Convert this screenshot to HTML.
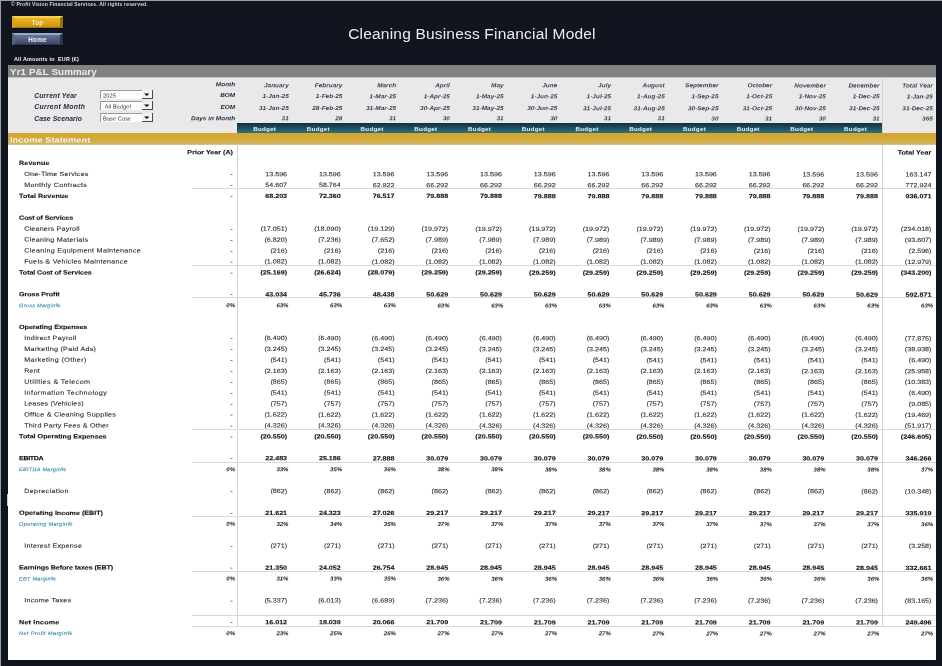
<!DOCTYPE html>
<html lang="en">
<head>
<meta charset="utf-8">
<title>Cleaning Business Financial Model</title>
<style>
*{box-sizing:border-box;margin:0;padding:0}
html,body{width:942px;height:666px;overflow:hidden;background:#10151f}
body{position:relative;font-family:"Liberation Sans",sans-serif;color:#1a1a1a}
#pg{position:absolute;left:0;top:0;width:942px;height:666px;overflow:hidden;filter:blur(.3px)}
.a{position:absolute;white-space:nowrap}
.c{text-align:center}
.row,.hd{position:absolute;left:0;width:942px;height:10px;line-height:10px;transform-origin:0 0;white-space:nowrap}
.row{font-size:6.4px;color:#2a2a2a;-webkit-text-stroke:.1px #2a2a2a}
.row span,.hd span{position:absolute;top:0}
.v{text-align:right;width:60px}
.b,.h{font-weight:bold;color:#161616;-webkit-text-stroke:.12px #161616}
.row .p{font-weight:normal;color:#333;-webkit-text-stroke:.1px #333}
.m{font-style:italic;font-weight:bold;font-size:6.0px;color:#2c2c2c;-webkit-text-stroke:.04px #2c2c2c}
.m .l{color:#318aa9;font-weight:normal;font-size:5.5px;-webkit-text-stroke:.12px #318aa9}
.hd{font-size:6.2px;font-style:italic;font-weight:bold;color:#3b4152;letter-spacing:.03px}
.hd .k{color:#262c40}
.bd{position:absolute;left:0;top:124.2px;width:942px;height:10px;line-height:10px;font-size:6.2px;font-weight:bold;color:#eef3f5;letter-spacing:.3px}
.bd span{position:absolute;top:0;width:50px;text-align:center}
.hl{position:absolute;left:192px;width:744px;height:1px;background:#d9d9d9}
.vl{position:absolute;width:1px;background:#d3d3d3}
.btn{position:absolute;left:12px;width:51px;height:12px;border-style:solid;border-width:2px 3px 1px 3px;color:#f6ecc4;font-weight:bold;font-size:6.3px;letter-spacing:.3px;line-height:10.4px;text-align:center;box-shadow:0 0 1.5px 0.5px rgba(0,0,0,.8)}
.btn.t{background:linear-gradient(#ebb624 0%,#e0a519 50%,#c99312 100%);border-color:#f7d450 #94700f #9f770d #d9a31b}
.btn.g{background:linear-gradient(#64769a 0%,#4f5f7d 50%,#3d4a63 100%);border-color:#96a8cc #2b3447 #2e384d #55647f;color:#f0f3fa;line-height:9.4px}
.lb{position:absolute;left:34.2px;font-size:6.8px;line-height:11px;font-style:italic;font-weight:bold;color:#232a3e;white-space:nowrap}
.dd{position:absolute;left:99.5px;width:53.3px;height:9px;background:rgba(253,253,253,.99);border:1px solid #9a9a9a;border-right:0;border-bottom:0;font-size:5.7px;letter-spacing:.05px;line-height:8.8px;color:#383838;padding-left:2.6px;white-space:nowrap}
.dd i{position:absolute;right:0;top:-1px;width:11px;height:9px;background:#f1f1f1;border-right:1px solid #4a4a4a;border-bottom:1px solid #4a4a4a}
.dd i:after{content:"";position:absolute;left:2.3px;top:3.4px;width:5.4px;height:2.7px;background:#0c0c0c;clip-path:polygon(0 0,100% 0,50% 100%)}
.dd b{display:inline-block;font-weight:normal;transform:matrix(1,.0005,0,1,0,.55)}
</style>
</head>
<body>
<div id="pg">
<div class="a" style="left:0;top:0;width:942px;height:1px;background:#9fa1a6"></div>
<div class="a" style="left:0;top:0;width:1px;height:666px;background:#9a9ca4"></div>
<div class="a" style="left:11px;top:1px;font-size:5px;letter-spacing:.17px;line-height:7px;color:#d8d8d8;font-weight:bold">© Profit Vision Financial Services. All rights reserved.</div>
<div class="btn t" style="top:16px">Top</div>
<div class="btn g" style="top:33px">Home</div>
<div class="a c" style="left:272px;width:400px;top:22.5px;font-size:15.5px;letter-spacing:.19px;line-height:22px;color:#ececec">Cleaning Business Financial Model</div>
<div class="a" style="left:14px;top:55.2px;font-size:5.4px;letter-spacing:.2px;line-height:8px;color:#f2f2f2;font-weight:bold">All Amounts in&nbsp; EUR (€)</div>
<div class="a" style="left:8px;top:65px;width:928px;height:12px;background:#818283"></div>
<div class="a" style="left:8px;top:77px;width:928px;height:56px;background:linear-gradient(#c4c4c5 0,#c4c4c5 1px,#e9e9ea 1px)"></div>
<div class="a" style="left:8px;top:144px;width:928px;height:516px;background:#fff"></div>
<div class="a" style="left:7px;top:494px;width:1px;height:12px;background:#c9ccd2"></div>
<div class="vl" style="left:237px;top:145px;height:481px"></div>
<div class="vl" style="left:882px;top:77px;height:549px"></div>
<div class="a" style="left:237px;top:123px;width:645px;height:10px;background:linear-gradient(#172c40 0%,#1f566a 60%,#2a7482 100%)"></div>
<div class="a" style="left:8px;top:133px;width:928px;height:12px;background:linear-gradient(#d6a628 0%,#d3aa3a 45%,#cfb25c 88%,#dcc88e 100%)"></div>
<div class="a" style="left:10px;top:66.3px;font-size:9.8px;letter-spacing:.1px;line-height:12px;color:#ececec;font-weight:bold">Yr1 P&amp;L Summary</div>
<div class="a" style="left:10px;top:134px;font-size:7.7px;line-height:12px;color:#f6f3ea;font-weight:bold;transform:matrix(1.213,0.0005,0,1,0,.6);transform-origin:0 50%">Income Statement</div>
<div class="lb" style="top:90.1px;letter-spacing:0.16px">Current Year</div>
<div class="dd" style="top:90px"><b>2025</b><i></i></div>
<div class="lb" style="top:100.8px;letter-spacing:0.33px">Current Month</div>
<div class="dd" style="top:101px"><b>&nbsp;All Budget</b><i></i></div>
<div class="lb" style="top:112.8px;letter-spacing:0.07px">Case Scenario</div>
<div class="dd" style="top:113px"><b>Base Case</b><i></i></div>
<div class="hd" style="top:80px;transform:matrix(1.035,0.0005,0,0.94,0,0.42)"><span class="v k" style="left:167.25px;top:-1.12px">Month</span><span class="v" style="left:218.99px">January</span><span class="v" style="left:270.89px">February</span><span class="v" style="left:322.79px">March</span><span class="v" style="left:374.7px">April</span><span class="v" style="left:426.6px">May</span><span class="v" style="left:478.5px">June</span><span class="v" style="left:530.41px">July</span><span class="v" style="left:582.31px">August</span><span class="v" style="left:634.21px">September</span><span class="v" style="left:686.12px">October</span><span class="v" style="left:738.02px">November</span><span class="v" style="left:789.92px">December</span><span class="v" style="left:841.35px">Total Year</span></div>
<div class="hd" style="top:91px;transform:matrix(1.035,0.0005,0,0.94,0,0.37)"><span class="v k" style="left:167.25px;top:-0.74px">BOM</span><span class="v" style="left:218.99px">1-Jan-25</span><span class="v" style="left:270.89px">1-Feb-25</span><span class="v" style="left:322.79px">1-Mar-25</span><span class="v" style="left:374.7px">1-Apr-25</span><span class="v" style="left:426.6px">1-May-25</span><span class="v" style="left:478.5px">1-Jun-25</span><span class="v" style="left:530.41px">1-Jul-25</span><span class="v" style="left:582.31px">1-Aug-25</span><span class="v" style="left:634.21px">1-Sep-25</span><span class="v" style="left:686.12px">1-Oct-25</span><span class="v" style="left:738.02px">1-Nov-25</span><span class="v" style="left:789.92px">1-Dec-25</span><span class="v" style="left:841.35px">1-Jan-25</span></div>
<div class="hd" style="top:103px;transform:matrix(1.035,0.0005,0,0.94,0,0.27)"><span class="v k" style="left:167.25px;top:-1.06px">EOM</span><span class="v" style="left:218.99px">31-Jan-25</span><span class="v" style="left:270.89px">28-Feb-25</span><span class="v" style="left:322.79px">31-Mar-25</span><span class="v" style="left:374.7px">30-Apr-25</span><span class="v" style="left:426.6px">31-May-25</span><span class="v" style="left:478.5px">30-Jun-25</span><span class="v" style="left:530.41px">31-Jul-25</span><span class="v" style="left:582.31px">31-Aug-25</span><span class="v" style="left:634.21px">30-Sep-25</span><span class="v" style="left:686.12px">31-Oct-25</span><span class="v" style="left:738.02px">30-Nov-25</span><span class="v" style="left:789.92px">31-Dec-25</span><span class="v" style="left:841.35px">31-Dec-25</span></div>
<div class="hd" style="top:113px;transform:matrix(1.035,0.0005,0,0.94,0,0.47)"><span class="v k" style="left:167.25px">Days in Month</span><span class="v" style="left:218.99px">31</span><span class="v" style="left:270.89px">28</span><span class="v" style="left:322.79px">31</span><span class="v" style="left:374.7px">30</span><span class="v" style="left:426.6px">31</span><span class="v" style="left:478.5px">30</span><span class="v" style="left:530.41px">31</span><span class="v" style="left:582.31px">31</span><span class="v" style="left:634.21px">30</span><span class="v" style="left:686.12px">31</span><span class="v" style="left:738.02px">30</span><span class="v" style="left:789.92px">31</span><span class="v" style="left:841.35px">365</span></div>
<div class="bd"><span style="left:239.7px">Budget</span><span style="left:293.4px">Budget</span><span style="left:347.1px">Budget</span><span style="left:400.9px">Budget</span><span style="left:454.6px">Budget</span><span style="left:508.3px">Budget</span><span style="left:562.0px">Budget</span><span style="left:615.7px">Budget</span><span style="left:669.5px">Budget</span><span style="left:723.2px">Budget</span><span style="left:776.9px">Budget</span><span style="left:830.6px">Budget</span></div>
<div class="row b" style="top:147px;transform:matrix(1.12,0.0005,0,0.94,0,0.59)"><span class="v" style="left:148.04px">Prior Year (A)</span><span class="v" style="left:771.43px">Total Year</span></div>
<div class="row h" style="top:158px;transform:matrix(1.12,0.0005,0,0.94,0,0.52)"><span class="l" style="left:17.05px;letter-spacing:0.07px">Revenue</span></div>
<div class="row i" style="top:169px;transform:matrix(1.12,0.0005,0,0.94,0,0.45)"><span class="l" style="left:21.61px;letter-spacing:0.18px">One-Time Services</span><span class="v p" style="left:147.77px">-</span><span class="v" style="left:196.34px">13.596</span><span class="v" style="left:244.3px">13.596</span><span class="v" style="left:292.27px">13.596</span><span class="v" style="left:340.23px">13.596</span><span class="v" style="left:388.2px">13.596</span><span class="v" style="left:436.16px">13.596</span><span class="v" style="left:484.12px">13.596</span><span class="v" style="left:532.09px">13.596</span><span class="v" style="left:580.05px">13.596</span><span class="v" style="left:628.02px">13.596</span><span class="v" style="left:675.98px">13.596</span><span class="v" style="left:723.95px">13.596</span><span class="v" style="left:771.7px">163.147</span></div>
<div class="row i" style="top:180px;transform:matrix(1.12,0.0005,0,0.94,0,0.38)"><span class="l" style="left:21.61px;letter-spacing:0.28px">Monthly Contracts</span><span class="v p" style="left:147.77px">-</span><span class="v" style="left:196.34px">54.607</span><span class="v" style="left:244.3px">58.764</span><span class="v" style="left:292.27px">62.922</span><span class="v" style="left:340.23px">66.292</span><span class="v" style="left:388.2px">66.292</span><span class="v" style="left:436.16px">66.292</span><span class="v" style="left:484.12px">66.292</span><span class="v" style="left:532.09px">66.292</span><span class="v" style="left:580.05px">66.292</span><span class="v" style="left:628.02px">66.292</span><span class="v" style="left:675.98px">66.292</span><span class="v" style="left:723.95px">66.292</span><span class="v" style="left:771.7px">772.924</span></div>
<div class="row b" style="top:191px;transform:matrix(1.12,0.0005,0,0.94,0,0.31)"><span class="l" style="left:17.05px;letter-spacing:0.06px">Total Revenue</span><span class="v p" style="left:147.77px">-</span><span class="v" style="left:196.34px">68.203</span><span class="v" style="left:244.3px">72.360</span><span class="v" style="left:292.27px">76.517</span><span class="v" style="left:340.23px">79.888</span><span class="v" style="left:388.2px">79.888</span><span class="v" style="left:436.16px">79.888</span><span class="v" style="left:484.12px">79.888</span><span class="v" style="left:532.09px">79.888</span><span class="v" style="left:580.05px">79.888</span><span class="v" style="left:628.02px">79.888</span><span class="v" style="left:675.98px">79.888</span><span class="v" style="left:723.95px">79.888</span><span class="v" style="left:771.7px">936.071</span></div>
<div class="row h" style="top:213px;transform:matrix(1.12,0.0005,0,0.94,0,0.17)"><span class="l" style="left:17.05px;letter-spacing:-0.12px">Cost of Services</span></div>
<div class="row i" style="top:224px;transform:matrix(1.12,0.0005,0,0.94,0,0.1)"><span class="l" style="left:21.61px;letter-spacing:0.17px">Cleaners Payroll</span><span class="v p" style="left:147.77px">-</span><span class="v" style="left:196.34px">(17.051)</span><span class="v" style="left:244.3px">(18.090)</span><span class="v" style="left:292.27px">(19.129)</span><span class="v" style="left:340.23px">(19.972)</span><span class="v" style="left:388.2px">(19.972)</span><span class="v" style="left:436.16px">(19.972)</span><span class="v" style="left:484.12px">(19.972)</span><span class="v" style="left:532.09px">(19.972)</span><span class="v" style="left:580.05px">(19.972)</span><span class="v" style="left:628.02px">(19.972)</span><span class="v" style="left:675.98px">(19.972)</span><span class="v" style="left:723.95px">(19.972)</span><span class="v" style="left:771.7px">(234.018)</span></div>
<div class="row i" style="top:235px;transform:matrix(1.12,0.0005,0,0.94,0,0.03)"><span class="l" style="left:21.61px;letter-spacing:0.24px">Cleaning Materials</span><span class="v p" style="left:147.77px">-</span><span class="v" style="left:196.34px">(6.820)</span><span class="v" style="left:244.3px">(7.236)</span><span class="v" style="left:292.27px">(7.652)</span><span class="v" style="left:340.23px">(7.989)</span><span class="v" style="left:388.2px">(7.989)</span><span class="v" style="left:436.16px">(7.989)</span><span class="v" style="left:484.12px">(7.989)</span><span class="v" style="left:532.09px">(7.989)</span><span class="v" style="left:580.05px">(7.989)</span><span class="v" style="left:628.02px">(7.989)</span><span class="v" style="left:675.98px">(7.989)</span><span class="v" style="left:723.95px">(7.989)</span><span class="v" style="left:771.7px">(93.607)</span></div>
<div class="row i" style="top:245px;transform:matrix(1.12,0.0005,0,0.94,0,0.96)"><span class="l" style="left:21.61px;letter-spacing:0.28px">Cleaning Equipment Maintenance</span><span class="v p" style="left:147.77px">-</span><span class="v" style="left:196.34px">(216)</span><span class="v" style="left:244.3px">(216)</span><span class="v" style="left:292.27px">(216)</span><span class="v" style="left:340.23px">(216)</span><span class="v" style="left:388.2px">(216)</span><span class="v" style="left:436.16px">(216)</span><span class="v" style="left:484.12px">(216)</span><span class="v" style="left:532.09px">(216)</span><span class="v" style="left:580.05px">(216)</span><span class="v" style="left:628.02px">(216)</span><span class="v" style="left:675.98px">(216)</span><span class="v" style="left:723.95px">(216)</span><span class="v" style="left:771.7px">(2.596)</span></div>
<div class="row i" style="top:256px;transform:matrix(1.12,0.0005,0,0.94,0,0.89)"><span class="l" style="left:21.61px;letter-spacing:0.25px">Fuels &amp; Vehicles Maintenance</span><span class="v p" style="left:147.77px">-</span><span class="v" style="left:196.34px">(1.082)</span><span class="v" style="left:244.3px">(1.082)</span><span class="v" style="left:292.27px">(1.082)</span><span class="v" style="left:340.23px">(1.082)</span><span class="v" style="left:388.2px">(1.082)</span><span class="v" style="left:436.16px">(1.082)</span><span class="v" style="left:484.12px">(1.082)</span><span class="v" style="left:532.09px">(1.082)</span><span class="v" style="left:580.05px">(1.082)</span><span class="v" style="left:628.02px">(1.082)</span><span class="v" style="left:675.98px">(1.082)</span><span class="v" style="left:723.95px">(1.082)</span><span class="v" style="left:771.7px">(12.979)</span></div>
<div class="row b" style="top:267px;transform:matrix(1.12,0.0005,0,0.94,0,0.82)"><span class="l" style="left:17.05px;letter-spacing:-0.08px">Total Cost of Services</span><span class="v p" style="left:147.77px">-</span><span class="v" style="left:196.34px">(25.169)</span><span class="v" style="left:244.3px">(26.624)</span><span class="v" style="left:292.27px">(28.079)</span><span class="v" style="left:340.23px">(29.259)</span><span class="v" style="left:388.2px">(29.259)</span><span class="v" style="left:436.16px">(29.259)</span><span class="v" style="left:484.12px">(29.259)</span><span class="v" style="left:532.09px">(29.259)</span><span class="v" style="left:580.05px">(29.259)</span><span class="v" style="left:628.02px">(29.259)</span><span class="v" style="left:675.98px">(29.259)</span><span class="v" style="left:723.95px">(29.259)</span><span class="v" style="left:771.7px">(343.200)</span></div>
<div class="row b" style="top:289px;transform:matrix(1.12,0.0005,0,0.94,0,0.68)"><span class="l" style="left:17.05px;letter-spacing:-0.06px">Gross Profit</span><span class="v p" style="left:147.77px">-</span><span class="v" style="left:196.34px">43.034</span><span class="v" style="left:244.3px">45.736</span><span class="v" style="left:292.27px">48.438</span><span class="v" style="left:340.23px">50.629</span><span class="v" style="left:388.2px">50.629</span><span class="v" style="left:436.16px">50.629</span><span class="v" style="left:484.12px">50.629</span><span class="v" style="left:532.09px">50.629</span><span class="v" style="left:580.05px">50.629</span><span class="v" style="left:628.02px">50.629</span><span class="v" style="left:675.98px">50.629</span><span class="v" style="left:723.95px">50.629</span><span class="v" style="left:771.7px">592.871</span></div>
<div class="row m" style="top:300px;transform:matrix(1.0,0.0005,0,0.94,0,0.58)"><span class="l" style="left:19.1px;letter-spacing:0.29px">Gross Margin%</span><span class="v" style="left:175px">0%</span><span class="v" style="left:228.4px">63%</span><span class="v" style="left:282.12px">63%</span><span class="v" style="left:335.84px">63%</span><span class="v" style="left:389.56px">63%</span><span class="v" style="left:443.28px">63%</span><span class="v" style="left:497px">63%</span><span class="v" style="left:550.72px">63%</span><span class="v" style="left:604.44px">63%</span><span class="v" style="left:658.16px">63%</span><span class="v" style="left:711.88px">63%</span><span class="v" style="left:765.6px">63%</span><span class="v" style="left:819.32px">63%</span><span class="v" style="left:873.1px">63%</span></div>
<div class="row h" style="top:322px;transform:matrix(1.12,0.0005,0,0.94,0,0.47)"><span class="l" style="left:17.05px;letter-spacing:-0.05px">Operating Expenses</span></div>
<div class="row i" style="top:333px;transform:matrix(1.12,0.0005,0,0.94,0,0.4)"><span class="l" style="left:21.61px;letter-spacing:0.29px">Indirect Payroll</span><span class="v p" style="left:147.77px">-</span><span class="v" style="left:196.34px">(6.490)</span><span class="v" style="left:244.3px">(6.490)</span><span class="v" style="left:292.27px">(6.490)</span><span class="v" style="left:340.23px">(6.490)</span><span class="v" style="left:388.2px">(6.490)</span><span class="v" style="left:436.16px">(6.490)</span><span class="v" style="left:484.12px">(6.490)</span><span class="v" style="left:532.09px">(6.490)</span><span class="v" style="left:580.05px">(6.490)</span><span class="v" style="left:628.02px">(6.490)</span><span class="v" style="left:675.98px">(6.490)</span><span class="v" style="left:723.95px">(6.490)</span><span class="v" style="left:771.7px">(77.875)</span></div>
<div class="row i" style="top:344px;transform:matrix(1.12,0.0005,0,0.94,0,0.33)"><span class="l" style="left:21.61px;letter-spacing:0.25px">Marketing (Paid Ads)</span><span class="v p" style="left:147.77px">-</span><span class="v" style="left:196.34px">(3.245)</span><span class="v" style="left:244.3px">(3.245)</span><span class="v" style="left:292.27px">(3.245)</span><span class="v" style="left:340.23px">(3.245)</span><span class="v" style="left:388.2px">(3.245)</span><span class="v" style="left:436.16px">(3.245)</span><span class="v" style="left:484.12px">(3.245)</span><span class="v" style="left:532.09px">(3.245)</span><span class="v" style="left:580.05px">(3.245)</span><span class="v" style="left:628.02px">(3.245)</span><span class="v" style="left:675.98px">(3.245)</span><span class="v" style="left:723.95px">(3.245)</span><span class="v" style="left:771.7px">(38.938)</span></div>
<div class="row i" style="top:355px;transform:matrix(1.12,0.0005,0,0.94,0,0.26)"><span class="l" style="left:21.61px;letter-spacing:0.34px">Marketing (Other)</span><span class="v p" style="left:147.77px">-</span><span class="v" style="left:196.34px">(541)</span><span class="v" style="left:244.3px">(541)</span><span class="v" style="left:292.27px">(541)</span><span class="v" style="left:340.23px">(541)</span><span class="v" style="left:388.2px">(541)</span><span class="v" style="left:436.16px">(541)</span><span class="v" style="left:484.12px">(541)</span><span class="v" style="left:532.09px">(541)</span><span class="v" style="left:580.05px">(541)</span><span class="v" style="left:628.02px">(541)</span><span class="v" style="left:675.98px">(541)</span><span class="v" style="left:723.95px">(541)</span><span class="v" style="left:771.7px">(6.490)</span></div>
<div class="row i" style="top:366px;transform:matrix(1.12,0.0005,0,0.94,0,0.19)"><span class="l" style="left:21.61px;letter-spacing:0.14px">Rent</span><span class="v p" style="left:147.77px">-</span><span class="v" style="left:196.34px">(2.163)</span><span class="v" style="left:244.3px">(2.163)</span><span class="v" style="left:292.27px">(2.163)</span><span class="v" style="left:340.23px">(2.163)</span><span class="v" style="left:388.2px">(2.163)</span><span class="v" style="left:436.16px">(2.163)</span><span class="v" style="left:484.12px">(2.163)</span><span class="v" style="left:532.09px">(2.163)</span><span class="v" style="left:580.05px">(2.163)</span><span class="v" style="left:628.02px">(2.163)</span><span class="v" style="left:675.98px">(2.163)</span><span class="v" style="left:723.95px">(2.163)</span><span class="v" style="left:771.7px">(25.958)</span></div>
<div class="row i" style="top:377px;transform:matrix(1.12,0.0005,0,0.94,0,0.12)"><span class="l" style="left:21.61px;letter-spacing:0.37px">Utilities &amp; Telecom</span><span class="v p" style="left:147.77px">-</span><span class="v" style="left:196.34px">(865)</span><span class="v" style="left:244.3px">(865)</span><span class="v" style="left:292.27px">(865)</span><span class="v" style="left:340.23px">(865)</span><span class="v" style="left:388.2px">(865)</span><span class="v" style="left:436.16px">(865)</span><span class="v" style="left:484.12px">(865)</span><span class="v" style="left:532.09px">(865)</span><span class="v" style="left:580.05px">(865)</span><span class="v" style="left:628.02px">(865)</span><span class="v" style="left:675.98px">(865)</span><span class="v" style="left:723.95px">(865)</span><span class="v" style="left:771.7px">(10.383)</span></div>
<div class="row i" style="top:388px;transform:matrix(1.12,0.0005,0,0.94,0,0.05)"><span class="l" style="left:21.61px;letter-spacing:0.37px">Information Technology</span><span class="v p" style="left:147.77px">-</span><span class="v" style="left:196.34px">(541)</span><span class="v" style="left:244.3px">(541)</span><span class="v" style="left:292.27px">(541)</span><span class="v" style="left:340.23px">(541)</span><span class="v" style="left:388.2px">(541)</span><span class="v" style="left:436.16px">(541)</span><span class="v" style="left:484.12px">(541)</span><span class="v" style="left:532.09px">(541)</span><span class="v" style="left:580.05px">(541)</span><span class="v" style="left:628.02px">(541)</span><span class="v" style="left:675.98px">(541)</span><span class="v" style="left:723.95px">(541)</span><span class="v" style="left:771.7px">(6.490)</span></div>
<div class="row i" style="top:398px;transform:matrix(1.12,0.0005,0,0.94,0,0.98)"><span class="l" style="left:21.61px;letter-spacing:0.16px">Leases (Vehicles)</span><span class="v p" style="left:147.77px">-</span><span class="v" style="left:196.34px">(757)</span><span class="v" style="left:244.3px">(757)</span><span class="v" style="left:292.27px">(757)</span><span class="v" style="left:340.23px">(757)</span><span class="v" style="left:388.2px">(757)</span><span class="v" style="left:436.16px">(757)</span><span class="v" style="left:484.12px">(757)</span><span class="v" style="left:532.09px">(757)</span><span class="v" style="left:580.05px">(757)</span><span class="v" style="left:628.02px">(757)</span><span class="v" style="left:675.98px">(757)</span><span class="v" style="left:723.95px">(757)</span><span class="v" style="left:771.7px">(9.085)</span></div>
<div class="row i" style="top:409px;transform:matrix(1.12,0.0005,0,0.94,0,0.91)"><span class="l" style="left:21.61px;letter-spacing:0.24px">Office &amp; Cleaning Supplies</span><span class="v p" style="left:147.77px">-</span><span class="v" style="left:196.34px">(1.622)</span><span class="v" style="left:244.3px">(1.622)</span><span class="v" style="left:292.27px">(1.622)</span><span class="v" style="left:340.23px">(1.622)</span><span class="v" style="left:388.2px">(1.622)</span><span class="v" style="left:436.16px">(1.622)</span><span class="v" style="left:484.12px">(1.622)</span><span class="v" style="left:532.09px">(1.622)</span><span class="v" style="left:580.05px">(1.622)</span><span class="v" style="left:628.02px">(1.622)</span><span class="v" style="left:675.98px">(1.622)</span><span class="v" style="left:723.95px">(1.622)</span><span class="v" style="left:771.7px">(19.469)</span></div>
<div class="row i" style="top:420px;transform:matrix(1.12,0.0005,0,0.94,0,0.84)"><span class="l" style="left:21.61px;letter-spacing:0.19px">Third Party Fees &amp; Other</span><span class="v p" style="left:147.77px">-</span><span class="v" style="left:196.34px">(4.326)</span><span class="v" style="left:244.3px">(4.326)</span><span class="v" style="left:292.27px">(4.326)</span><span class="v" style="left:340.23px">(4.326)</span><span class="v" style="left:388.2px">(4.326)</span><span class="v" style="left:436.16px">(4.326)</span><span class="v" style="left:484.12px">(4.326)</span><span class="v" style="left:532.09px">(4.326)</span><span class="v" style="left:580.05px">(4.326)</span><span class="v" style="left:628.02px">(4.326)</span><span class="v" style="left:675.98px">(4.326)</span><span class="v" style="left:723.95px">(4.326)</span><span class="v" style="left:771.7px">(51.917)</span></div>
<div class="row b" style="top:431px;transform:matrix(1.12,0.0005,0,0.94,0,0.77)"><span class="l" style="left:17.05px;letter-spacing:-0.01px">Total Operating Expenses</span><span class="v p" style="left:147.77px">-</span><span class="v" style="left:196.34px">(20.550)</span><span class="v" style="left:244.3px">(20.550)</span><span class="v" style="left:292.27px">(20.550)</span><span class="v" style="left:340.23px">(20.550)</span><span class="v" style="left:388.2px">(20.550)</span><span class="v" style="left:436.16px">(20.550)</span><span class="v" style="left:484.12px">(20.550)</span><span class="v" style="left:532.09px">(20.550)</span><span class="v" style="left:580.05px">(20.550)</span><span class="v" style="left:628.02px">(20.550)</span><span class="v" style="left:675.98px">(20.550)</span><span class="v" style="left:723.95px">(20.550)</span><span class="v" style="left:771.7px">(246.605)</span></div>
<div class="row b" style="top:453px;transform:matrix(1.12,0.0005,0,0.94,0,0.63)"><span class="l" style="left:17.05px;letter-spacing:-0.35px">EBITDA</span><span class="v p" style="left:147.77px">-</span><span class="v" style="left:196.34px">22.483</span><span class="v" style="left:244.3px">25.186</span><span class="v" style="left:292.27px">27.888</span><span class="v" style="left:340.23px">30.079</span><span class="v" style="left:388.2px">30.079</span><span class="v" style="left:436.16px">30.079</span><span class="v" style="left:484.12px">30.079</span><span class="v" style="left:532.09px">30.079</span><span class="v" style="left:580.05px">30.079</span><span class="v" style="left:628.02px">30.079</span><span class="v" style="left:675.98px">30.079</span><span class="v" style="left:723.95px">30.079</span><span class="v" style="left:771.7px">346.266</span></div>
<div class="row m" style="top:464px;transform:matrix(1.0,0.0005,0,0.94,0,0.53)"><span class="l" style="left:19.1px;letter-spacing:0.31px">EBITDA Margin%</span><span class="v" style="left:175px">0%</span><span class="v" style="left:228.4px">33%</span><span class="v" style="left:282.12px">35%</span><span class="v" style="left:335.84px">36%</span><span class="v" style="left:389.56px">38%</span><span class="v" style="left:443.28px">38%</span><span class="v" style="left:497px">38%</span><span class="v" style="left:550.72px">38%</span><span class="v" style="left:604.44px">38%</span><span class="v" style="left:658.16px">38%</span><span class="v" style="left:711.88px">38%</span><span class="v" style="left:765.6px">38%</span><span class="v" style="left:819.32px">38%</span><span class="v" style="left:873.1px">37%</span></div>
<div class="row i" style="top:486px;transform:matrix(1.12,0.0005,0,0.94,0,0.42)"><span class="l" style="left:21.61px;letter-spacing:0.33px">Depreciation</span><span class="v p" style="left:147.77px">-</span><span class="v" style="left:196.34px">(862)</span><span class="v" style="left:244.3px">(862)</span><span class="v" style="left:292.27px">(862)</span><span class="v" style="left:340.23px">(862)</span><span class="v" style="left:388.2px">(862)</span><span class="v" style="left:436.16px">(862)</span><span class="v" style="left:484.12px">(862)</span><span class="v" style="left:532.09px">(862)</span><span class="v" style="left:580.05px">(862)</span><span class="v" style="left:628.02px">(862)</span><span class="v" style="left:675.98px">(862)</span><span class="v" style="left:723.95px">(862)</span><span class="v" style="left:771.7px">(10.348)</span></div>
<div class="row b" style="top:508px;transform:matrix(1.12,0.0005,0,0.94,0,0.28)"><span class="l" style="left:17.05px;letter-spacing:0px">Operating Income (EBIT)</span><span class="v p" style="left:147.77px">-</span><span class="v" style="left:196.34px">21.621</span><span class="v" style="left:244.3px">24.323</span><span class="v" style="left:292.27px">27.026</span><span class="v" style="left:340.23px">29.217</span><span class="v" style="left:388.2px">29.217</span><span class="v" style="left:436.16px">29.217</span><span class="v" style="left:484.12px">29.217</span><span class="v" style="left:532.09px">29.217</span><span class="v" style="left:580.05px">29.217</span><span class="v" style="left:628.02px">29.217</span><span class="v" style="left:675.98px">29.217</span><span class="v" style="left:723.95px">29.217</span><span class="v" style="left:771.7px">335.919</span></div>
<div class="row m" style="top:519px;transform:matrix(1.0,0.0005,0,0.94,0,0.18)"><span class="l" style="left:19.1px;letter-spacing:0.37px">Operating Margin%</span><span class="v" style="left:175px">0%</span><span class="v" style="left:228.4px">32%</span><span class="v" style="left:282.12px">34%</span><span class="v" style="left:335.84px">35%</span><span class="v" style="left:389.56px">37%</span><span class="v" style="left:443.28px">37%</span><span class="v" style="left:497px">37%</span><span class="v" style="left:550.72px">37%</span><span class="v" style="left:604.44px">37%</span><span class="v" style="left:658.16px">37%</span><span class="v" style="left:711.88px">37%</span><span class="v" style="left:765.6px">37%</span><span class="v" style="left:819.32px">37%</span><span class="v" style="left:873.1px">36%</span></div>
<div class="row i" style="top:541px;transform:matrix(1.12,0.0005,0,0.94,0,0.07)"><span class="l" style="left:21.61px;letter-spacing:0.24px">Interest Expense</span><span class="v p" style="left:147.77px">-</span><span class="v" style="left:196.34px">(271)</span><span class="v" style="left:244.3px">(271)</span><span class="v" style="left:292.27px">(271)</span><span class="v" style="left:340.23px">(271)</span><span class="v" style="left:388.2px">(271)</span><span class="v" style="left:436.16px">(271)</span><span class="v" style="left:484.12px">(271)</span><span class="v" style="left:532.09px">(271)</span><span class="v" style="left:580.05px">(271)</span><span class="v" style="left:628.02px">(271)</span><span class="v" style="left:675.98px">(271)</span><span class="v" style="left:723.95px">(271)</span><span class="v" style="left:771.7px">(3.258)</span></div>
<div class="row b" style="top:562px;transform:matrix(1.12,0.0005,0,0.94,0,0.93)"><span class="l" style="left:17.05px;letter-spacing:-0.09px">Earnings Before taxes (EBT)</span><span class="v p" style="left:147.77px">-</span><span class="v" style="left:196.34px">21.350</span><span class="v" style="left:244.3px">24.052</span><span class="v" style="left:292.27px">26.754</span><span class="v" style="left:340.23px">28.945</span><span class="v" style="left:388.2px">28.945</span><span class="v" style="left:436.16px">28.945</span><span class="v" style="left:484.12px">28.945</span><span class="v" style="left:532.09px">28.945</span><span class="v" style="left:580.05px">28.945</span><span class="v" style="left:628.02px">28.945</span><span class="v" style="left:675.98px">28.945</span><span class="v" style="left:723.95px">28.945</span><span class="v" style="left:771.7px">332.661</span></div>
<div class="row m" style="top:573px;transform:matrix(1.0,0.0005,0,0.94,0,0.83)"><span class="l" style="left:19.1px;letter-spacing:0.27px">EBT Margin%</span><span class="v" style="left:175px">0%</span><span class="v" style="left:228.4px">31%</span><span class="v" style="left:282.12px">33%</span><span class="v" style="left:335.84px">35%</span><span class="v" style="left:389.56px">36%</span><span class="v" style="left:443.28px">36%</span><span class="v" style="left:497px">36%</span><span class="v" style="left:550.72px">36%</span><span class="v" style="left:604.44px">36%</span><span class="v" style="left:658.16px">36%</span><span class="v" style="left:711.88px">36%</span><span class="v" style="left:765.6px">36%</span><span class="v" style="left:819.32px">36%</span><span class="v" style="left:873.1px">36%</span></div>
<div class="row i" style="top:595px;transform:matrix(1.12,0.0005,0,0.94,0,0.72)"><span class="l" style="left:21.61px;letter-spacing:0.24px">Income Taxes</span><span class="v p" style="left:147.77px">-</span><span class="v" style="left:196.34px">(5.337)</span><span class="v" style="left:244.3px">(6.013)</span><span class="v" style="left:292.27px">(6.689)</span><span class="v" style="left:340.23px">(7.236)</span><span class="v" style="left:388.2px">(7.236)</span><span class="v" style="left:436.16px">(7.236)</span><span class="v" style="left:484.12px">(7.236)</span><span class="v" style="left:532.09px">(7.236)</span><span class="v" style="left:580.05px">(7.236)</span><span class="v" style="left:628.02px">(7.236)</span><span class="v" style="left:675.98px">(7.236)</span><span class="v" style="left:723.95px">(7.236)</span><span class="v" style="left:771.7px">(83.165)</span></div>
<div class="row b" style="top:617px;transform:matrix(1.12,0.0005,0,0.94,0,0.58)"><span class="l" style="left:17.05px;letter-spacing:0.15px">Net Income</span><span class="v p" style="left:147.77px">-</span><span class="v" style="left:196.34px">16.012</span><span class="v" style="left:244.3px">18.039</span><span class="v" style="left:292.27px">20.066</span><span class="v" style="left:340.23px">21.709</span><span class="v" style="left:388.2px">21.709</span><span class="v" style="left:436.16px">21.709</span><span class="v" style="left:484.12px">21.709</span><span class="v" style="left:532.09px">21.709</span><span class="v" style="left:580.05px">21.709</span><span class="v" style="left:628.02px">21.709</span><span class="v" style="left:675.98px">21.709</span><span class="v" style="left:723.95px">21.709</span><span class="v" style="left:771.7px">249.496</span></div>
<div class="row m" style="top:628px;transform:matrix(1.0,0.0005,0,0.94,0,0.48)"><span class="l" style="left:19.1px;letter-spacing:0.4px">Net Profit Margin%</span><span class="v" style="left:175px">0%</span><span class="v" style="left:228.4px">23%</span><span class="v" style="left:282.12px">25%</span><span class="v" style="left:335.84px">26%</span><span class="v" style="left:389.56px">27%</span><span class="v" style="left:443.28px">27%</span><span class="v" style="left:497px">27%</span><span class="v" style="left:550.72px">27%</span><span class="v" style="left:604.44px">27%</span><span class="v" style="left:658.16px">27%</span><span class="v" style="left:711.88px">27%</span><span class="v" style="left:765.6px">27%</span><span class="v" style="left:819.32px">27%</span><span class="v" style="left:873.1px">27%</span></div>
<div class="hl" style="top:188px"></div>
<div class="hl" style="top:265px"></div>
<div class="hl" style="top:297px"></div>
<div class="hl" style="top:429px"></div>
<div class="hl" style="top:462px"></div>
<div class="hl" style="top:516px"></div>
<div class="hl" style="top:571px"></div>
<div class="hl" style="top:615px"></div>
<div class="hl" style="top:626px"></div>
</div>
</body>
</html>
